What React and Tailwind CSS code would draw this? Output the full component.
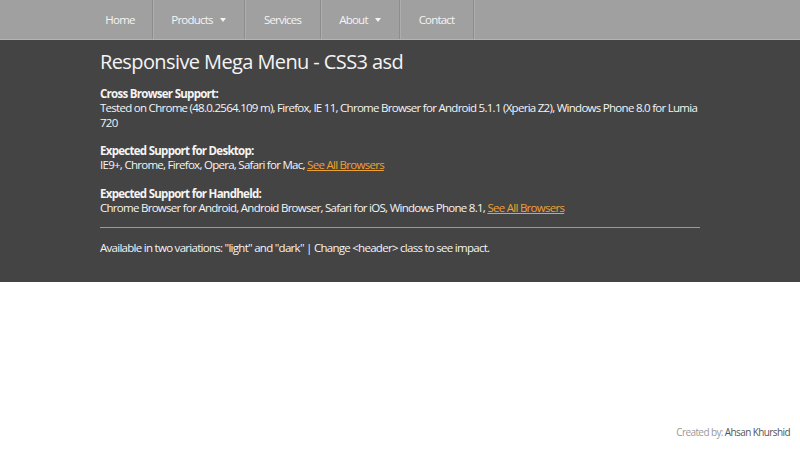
import React from 'react';

const NavItem = ({ label, caret, width }) => (
  <a href="#" className={`flex items-center justify-center gap-[7px] h-full text-[11.5px] tracking-[-0.8px] text-[#f4f4f4] border-r border-[#8d8d8d] shadow-[1px_0_0_#adadad] ${width}`}>
    <span>{label}</span>
    {caret && <span className="w-0 h-0 border-l-[3.5px] border-r-[3.5px] border-t-[4px] border-l-transparent border-r-transparent border-t-[#f4f4f4]" />}
  </a>
);

export default function App() {
  return (
    <div className="min-h-[450px] bg-white relative" style={{ fontFamily: '"Open Sans", "DejaVu Sans", sans-serif' }}>
      {/* nav */}
      <header className="bg-[#a0a0a0] h-[40px] border-b border-[#b4b4b4]">
        <nav className="w-[624px] mx-auto flex h-full">
          <NavItem label="Home" width="w-[65px]" />
          <NavItem label="Products" caret width="w-[92px]" />
          <NavItem label="Services" width="w-[76px]" />
          <NavItem label="About" caret width="w-[79px]" />
          <NavItem label="Contact" width="w-[74px]" />
        </nav>
      </header>

      {/* content */}
      <section className="bg-[#444444] pt-[10px] pb-[27px] text-[#f4f4f4]">
        <div className="w-[600px] mx-auto text-[11.5px] tracking-[-0.72px] leading-[14.4px]">
          <h1 className="text-[20px] tracking-[-0.6px] leading-[24px] mb-[13px]">Responsive Mega Menu - CSS3 asd</h1>
          <p className="mb-[13.4px]">
            <strong className="font-bold">Cross Browser Support:</strong><br />
            Tested on Chrome (48.0.2564.109 m), Firefox, IE 11, Chrome Browser for Android 5.1.1 (Xperia Z2), Windows Phone 8.0 for Lumia 720
          </p>
          <p className="mb-[14.4px]">
            <strong className="font-bold">Expected Support for Desktop:</strong><br />
            IE9+, Chrome, Firefox, Opera, Safari for Mac, <a href="#" className="text-[#f0a030] underline">See All Browsers</a>
          </p>
          <p className="mb-[11px]">
            <strong className="font-bold">Expected Support for Handheld:</strong><br />
            Chrome Browser for Android, Android Browser, Safari for iOS, Windows Phone 8.1, <a href="#" className="text-[#f0a030] underline">See All Browsers</a>
          </p>
          <hr className="border-0 h-[1px] bg-[#9a9a9a] mb-[13px]" />
          <p>Available in two variations: "light" and "dark" | Change &lt;header&gt; class to see impact.</p>
        </div>
      </section>

      <div className="absolute right-[10px] bottom-[10px] text-[10px] tracking-[-0.6px] text-[#999]">
        Created by: <span className="text-[#555]">Ahsan Khurshid</span>
      </div>
    </div>
  );
}
